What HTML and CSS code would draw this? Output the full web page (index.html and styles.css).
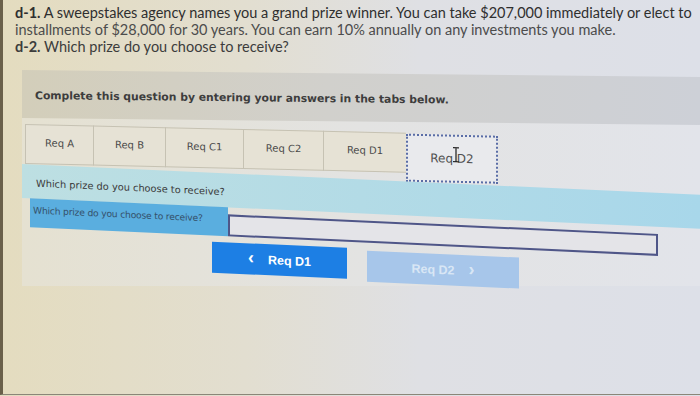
FILE: index.html
```html
<!DOCTYPE html>
<html>
<head>
<meta charset="utf-8">
<link rel="stylesheet" href="styles.css">
</head>
<body>
<div class="page">
  <div class="intro">
    <div class="line l1"><b>d-1.</b> A sweepstakes agency names you a grand prize winner. You can take $207,000 immediately or elect to</div>
    <div class="line l2">installments of $28,000 for 30 years. You can earn 10% annually on any investments you make.</div>
    <div class="line l3"><b>d-2.</b> Which prize do you choose to receive?</div>
  </div>
  <div class="card">
    <div class="card-head">Complete this question by entering your answers in the tabs below.</div>
    <div class="card-body">
      <div class="tabs">
        <div class="tab w1">Req A</div>
        <div class="tab w2">Req B</div>
        <div class="tab w3">Req C1</div>
        <div class="tab w4">Req C2</div>
        <div class="tab w5">Req D1</div>
        <div class="tab w6 active">Req D2
          <svg class="ibeam" width="8" height="16" viewBox="0 0 8 16"><path d="M1 1h6M4 1v14M1 15h6" fill="none" stroke="#2a2a2a" stroke-width="1.3"/></svg>
        </div>
      </div>
      <div class="lower">
        <div class="prompt">Which prize do you choose to receive?</div>
        <div class="answer-row">
          <div class="answer-label">Which prize do you choose to receive?</div>
          <div class="answer-input"></div>
        </div>
        <div class="nav">
          <div class="btn prev"><span class="chev">&#8249;</span> Req D1</div>
          <div class="btn next">Req D2 <span class="chev">&#8250;</span></div>
        </div>
      </div>
    </div>
  </div>
</div>
</body>
</html>
```
FILE: styles.css
```css
html, body {
  margin: 0;
  padding: 0;
}
body {
  width: 700px;
  height: 396px;
  overflow: hidden;
  background: linear-gradient(90deg, #e4dcbf 0%, #e2ded0 35%, #dfe0e4 60%, #dde0e8 100%);
}
.page {
  height: 395px;
  border-left: 3px solid #6a604a;
  border-bottom: 1px solid #8a8678;
  box-sizing: border-box;
  overflow: hidden;
}
.intro {
  padding: 4px 0 0 12px;
  font-family: Lato, "Open Sans", sans-serif;
  font-size: 14.5px;
  line-height: 17px;
  white-space: nowrap;
}
.line b { font-weight: 700; }
.l1 { color: #2f2f2f; }
.l2 { color: #4c4c4c; }
.l3 { color: #3c3c3c; }

.card {
  margin: 15px 0 0 19px;
}
.card-head {
  height: 48px;
  background: linear-gradient(90deg, #d3ceba 0%, #d1d0cc 45%, #cdd0d7 100%);
  font-family: "DejaVu Sans", Verdana, sans-serif;
  font-weight: 700;
  font-size: 10.8px;
  color: #3d3d3d;
  padding: 19px 0 0 13px;
  box-sizing: border-box;
  transform: skewY(0.6deg);
  transform-origin: left top;
}
.card-body {
  padding-top: 6px;
  background: linear-gradient(90deg, #e5e1d1 0%, #e3e3e2 50%, #e2e4ea 100%);
}
.tabs {
  display: flex;
  margin-left: 3px;
  height: 40px;
  transform: skewY(1.3deg);
  transform-origin: left top;
}
.tab {
  box-sizing: border-box;
  border: 1px solid #c6c2b3;
  border-right: none;
  background: #e6e2d5;
  font-family: "DejaVu Sans", Verdana, sans-serif;
  font-size: 10px;
  color: #4a4a4a;
  display: flex;
  justify-content: center;
  padding-top: 12px;
}
.w1 { width: 68px; }
.w2 { width: 72px; }
.w3 { width: 78px; }
.w4 { width: 80px; }
.w5 { width: 83px; }
.w6 { width: 92px; }
.tab.active {
  position: relative;
  background: #e9eaed;
  border: 2px dotted #5a6da6;
  font-size: 12px;
  padding-top: 15px;
  height: 48px;
  margin-top: 1px;
  color: #505050;
}
.ibeam {
  position: absolute;
  left: 44px;
  top: 10px;
}
.lower {
  transform: skewY(2.6deg);
  transform-origin: left top;
  padding-bottom: 20px;
}
.prompt {
  height: 34px;
  background: linear-gradient(90deg, #bddfe2 0%, #b3dbe6 50%, #a8d7ea 100%);
  font-family: "DejaVu Sans", Verdana, sans-serif;
  font-size: 9.8px;
  color: #3a3a3a;
  padding: 13px 0 0 14px;
  box-sizing: border-box;
}
.answer-row {
  display: flex;
  align-items: flex-start;
  margin-left: 8px;
}
.answer-label {
  width: 198px;
  height: 29px;
  background: #5aaedf;
  font-family: "DejaVu Sans", Verdana, sans-serif;
  font-size: 9.2px;
  color: #35516b;
  padding: 6px 0 0 3px;
  box-sizing: border-box;
  letter-spacing: -0.2px;
}
.answer-input {
  width: 430px;
  height: 22px;
  margin-top: 7px;
  box-sizing: border-box;
  border: 2px solid #4f5688;
  background: #e4e4e8;
}
.nav {
  display: flex;
  gap: 20px;
  margin: 6px 0 0 190px;
}
.btn {
  height: 31px;
  box-sizing: border-box;
  font-family: "Liberation Sans", Arial, sans-serif;
  font-weight: 700;
  font-size: 12.5px;
  display: flex;
  align-items: center;
  justify-content: center;
}
.prev {
  width: 135px;
  background: #1d7fe4;
  color: #ffffff;
  gap: 14px;
}
.next {
  width: 152px;
  background: #a7c6ea;
  color: #d9e6f5;
  gap: 14px;
  margin-top: 2px;
}
.chev {
  font-size: 18px;
  line-height: 1;
  margin-top: -3px;
}
```
